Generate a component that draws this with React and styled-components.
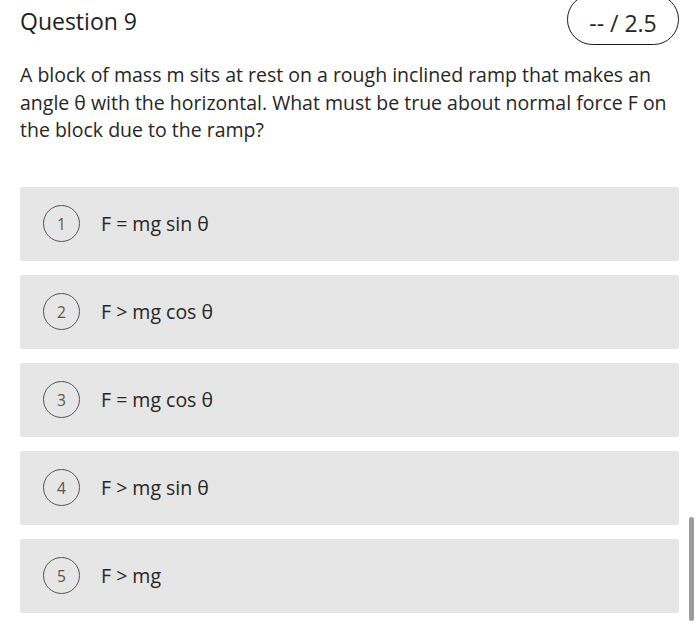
import React from 'react'
import styled, { createGlobalStyle } from 'styled-components'

const GlobalStyle = createGlobalStyle`
  body {
    margin: 0;
    background: #fff;
    font-family: "Open Sans", "Noto Sans", sans-serif;
    color: #262626;
    overflow: hidden;
  }
`;

const Page = styled.div`
  position: relative;
  width: 700px;
  height: 624px;
  padding: 0 20px;
  box-sizing: border-box;
`;

const Header = styled.div`
  display: flex;
  justify-content: space-between;
  align-items: flex-start;
  height: 45px;
`;

const Title = styled.h2`
  margin: 5px 0 0;
  font-size: 23px;
  font-weight: 500;
  line-height: 32px;
  color: #1e1e1e;
`;

const Score = styled.div`
  margin-top: -6px;
  margin-right: 1px;
  width: 112px;
  height: 51px;
  box-sizing: border-box;
  border: 1.5px solid #1a1a1a;
  border-radius: 26px;
  display: flex;
  align-items: center;
  justify-content: center;
  padding-top: 6px;
  font-size: 23px;
`;

const Prompt = styled.p`
  margin: 16px 0 0;
  font-size: 19.5px;
  line-height: 27.5px;
  width: 660px;
`;

const Options = styled.div`
  display: flex;
  flex-direction: column;
  gap: 14px;
  margin-top: 43px;
`;

const Option = styled.div`
  display: flex;
  align-items: center;
  gap: 21px;
  width: 659px;
  height: 74px;
  box-sizing: border-box;
  padding-left: 23px;
  background: #e6e6e6;
  border-radius: 3px;
`;

const Badge = styled.span`
  width: 37px;
  height: 37px;
  box-sizing: border-box;
  border: 1.5px solid #555;
  border-radius: 50%;
  display: flex;
  align-items: center;
  justify-content: center;
  font-size: 15.5px;
  color: #555;
`;

const Answer = styled.span`
  font-size: 19.5px;
`;

const Scrollbar = styled.div`
  position: absolute;
  left: 689px;
  top: 517px;
  width: 5px;
  height: 104px;
  border-radius: 3px;
  background: #9c9c9c;
`;

const answers = [
  'F = mg sin θ',
  'F > mg cos θ',
  'F = mg cos θ',
  'F > mg sin θ',
  'F > mg',
];

export default function App() {
  return (
    <Page>
      <GlobalStyle />
      <Header>
        <Title>Question 9</Title>
        <Score>-- / 2.5</Score>
      </Header>
      <Prompt>
        A block of mass m sits at rest on a rough inclined ramp that makes an
        angle θ with the horizontal. What must be true about normal force F on
        the block due to the ramp?
      </Prompt>
      <Options>
        {answers.map((a, i) => (
          <Option key={i}>
            <Badge>{i + 1}</Badge>
            <Answer>{a}</Answer>
          </Option>
        ))}
      </Options>
      <Scrollbar />
    </Page>
  );
}
